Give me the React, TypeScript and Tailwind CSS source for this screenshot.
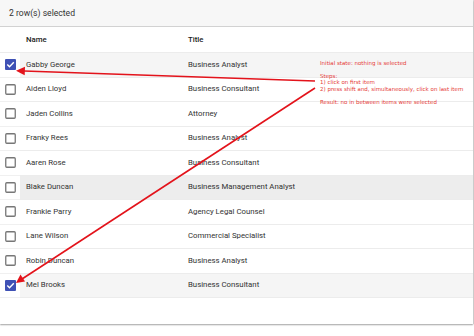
import React from "react";

const rows: { name: string; title: string; checked?: boolean; bg?: string }[] = [
  { name: "Gabby George", title: "Business Analyst", checked: true, bg: "sel" },
  { name: "Aiden Lloyd", title: "Business Consultant" },
  { name: "Jaden Collins", title: "Attorney" },
  { name: "Franky Rees", title: "Business Analyst" },
  { name: "Aaren Rose", title: "Business Consultant" },
  { name: "Blake Duncan", title: "Business Management Analyst", bg: "hover" },
  { name: "Frankie Parry", title: "Agency Legal Counsel" },
  { name: "Lane Wilson", title: "Commercial Specialist" },
  { name: "Robin Duncan", title: "Business Analyst" },
  { name: "Mel Brooks", title: "Business Consultant", checked: true, bg: "sel" },
];

function Box({ checked }: { checked?: boolean }) {
  if (checked) {
    return (
      <svg width="11" height="11" viewBox="0 0 11 11">
        <rect x="0" y="0" width="11" height="11" rx="1" fill="#3f51b5" />
        <path d="M2.3 5.6 L4.5 7.8 L8.8 3.2" stroke="#fff" strokeWidth="1.4" fill="none" />
      </svg>
    );
  }
  return (
    <svg width="11" height="11" viewBox="0 0 11 11">
      <rect x="0.75" y="0.75" width="9.5" height="9.5" rx="1" fill="none" stroke="#777" strokeWidth="1.3" />
    </svg>
  );
}

export default function App() {
  return (
    <div className="w-[474px] h-[336px] bg-white" style={{ fontFamily: "Roboto, 'Liberation Sans', sans-serif" }}>
      <div className="relative w-[473px] h-[324px] bg-white shadow-[0_1px_1.5px_rgba(0,0,0,0.35),1px_0_1px_rgba(0,0,0,0.12)] flex flex-col">
        <div className="h-[27px] bg-[#f7f7f7] border-b border-[#d2d2d2] flex items-center pl-[9px] text-[8.6px] text-[#333]">
          2 row(s) selected
        </div>
        <div className="h-[26px] flex items-center border-b border-[#ececec] text-[7.8px] font-medium text-[#222]">
          <div className="w-[20px]" />
          <div className="w-[168px] pl-[6px]">Name</div>
          <div>Title</div>
        </div>
        {rows.map((r) => (
          <div key={r.name} className="h-[24.5px] flex items-stretch text-[7.8px] text-[#333]">
            <div className="w-[20px] flex items-center justify-center bg-white border-b border-[#f0f0f0]">
              <Box checked={r.checked} />
            </div>
            <div
              className={
                "flex-1 flex items-center border-b border-[#ececec] " +
                (r.bg === "sel" ? "bg-[#f5f5f5]" : r.bg === "hover" ? "bg-[#ededed]" : "bg-white")
              }
            >
              <div className="w-[168px] pl-[6px]">{r.name}</div>
              <div>{r.title}</div>
            </div>
          </div>
        ))}
        <div className="flex-1" />

        <div
          className="absolute left-[320px] top-[59.5px] text-[5.5px] leading-[6.5px] text-[#e53935] whitespace-pre"
          style={{ fontFamily: "'DejaVu Sans', Verdana, sans-serif" }}
        >
          <div>Initial state: nothing is selected</div>
          <div>&nbsp;</div>
          <div>Steps:</div>
          <div>1) click on first item</div>
          <div>2) press shift and, simultaneously, click on last item</div>
          <div>&nbsp;</div>
          <div>Result: no in between items were selected</div>
        </div>

        <svg className="absolute left-0 top-0 pointer-events-none" width="474" height="336">
          <line x1="315" y1="81" x2="24" y2="71" stroke="#e3131b" strokeWidth="1.6" />
          <polygon points="16,70.8 25,66.8 24.7,75.3" fill="#e3131b" />
          <line x1="315" y1="88" x2="22" y2="279" stroke="#e3131b" strokeWidth="1.6" />
          <polygon points="16,283 20.5,274.6 25,281.4" fill="#e3131b" />
        </svg>
      </div>
    </div>
  );
}
